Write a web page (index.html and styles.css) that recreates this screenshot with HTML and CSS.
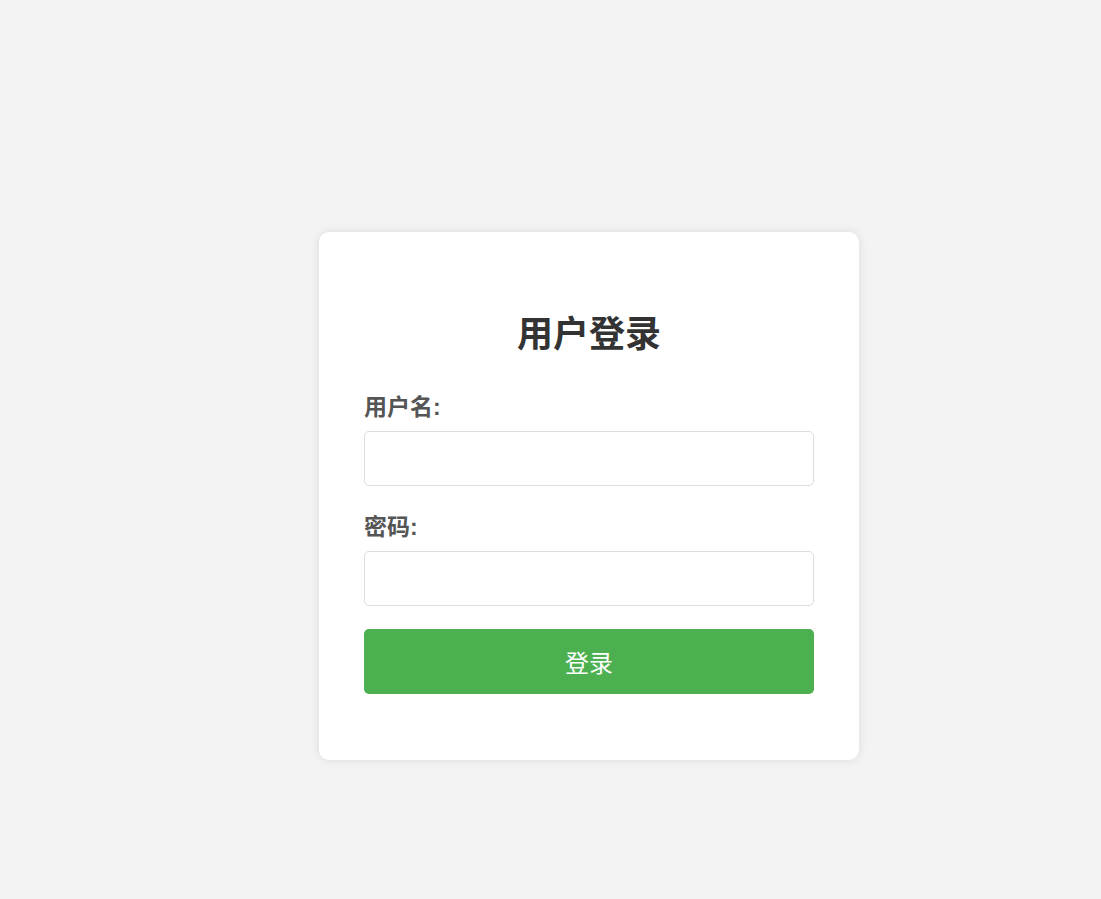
FILE: index.html
```html
<!DOCTYPE html>
<html lang="zh-CN">
<head>
<meta charset="utf-8">
<title>用户登录</title>
<link rel="stylesheet" href="styles.css">
</head>
<body>
<div class="login-card">
  <h2 class="title">用户登录</h2>
  <form class="login-form">
    <div class="field">
      <label class="label" for="username">用户名:</label>
      <input class="input" id="username" type="text">
    </div>
    <div class="field">
      <label class="label" for="password">密码:</label>
      <input class="input" id="password" type="password">
    </div>
    <button class="btn" type="button">登录</button>
  </form>
</div>
</body>
</html>
```
FILE: styles.css
```css
html, body {
  margin: 0;
  height: 100%;
}
body {
  background: #f3f3f3;
  font-family: "Liberation Sans", "Noto Sans CJK SC", sans-serif;
  display: flex;
  justify-content: center;
  align-items: center;
  padding: 93px 0 0 77px;
  box-sizing: border-box;
}
.login-card {
  width: 540px;
  box-sizing: border-box;
  background: #fff;
  border-radius: 10px;
  box-shadow: 0 0 10px rgba(0, 0, 0, 0.1);
  padding: 80px 45px 66px;
}
.title {
  margin: 0 0 35px;
  font-size: 36px;
  line-height: 46px;
  font-weight: bold;
  color: #333;
  text-align: center;
}
.login-form {
  display: flex;
  flex-direction: column;
}
.field {
  display: flex;
  flex-direction: column;
  margin-bottom: 27px;
}
.field + .field {
  margin-bottom: 23px;
}
.label {
  font-size: 23px;
  line-height: 28px;
  font-weight: bold;
  color: #555;
  margin-bottom: 10px;
}
.input {
  height: 55px;
  box-sizing: border-box;
  border: 1px solid #ddd;
  border-radius: 5px;
  padding: 0 12px;
  font-size: 16px;
  background: #fff;
}
.btn {
  height: 65px;
  border: none;
  border-radius: 5px;
  background: #4caf50;
  color: #fff;
  font-family: inherit;
  font-size: 24px;
  cursor: pointer;
}
```
